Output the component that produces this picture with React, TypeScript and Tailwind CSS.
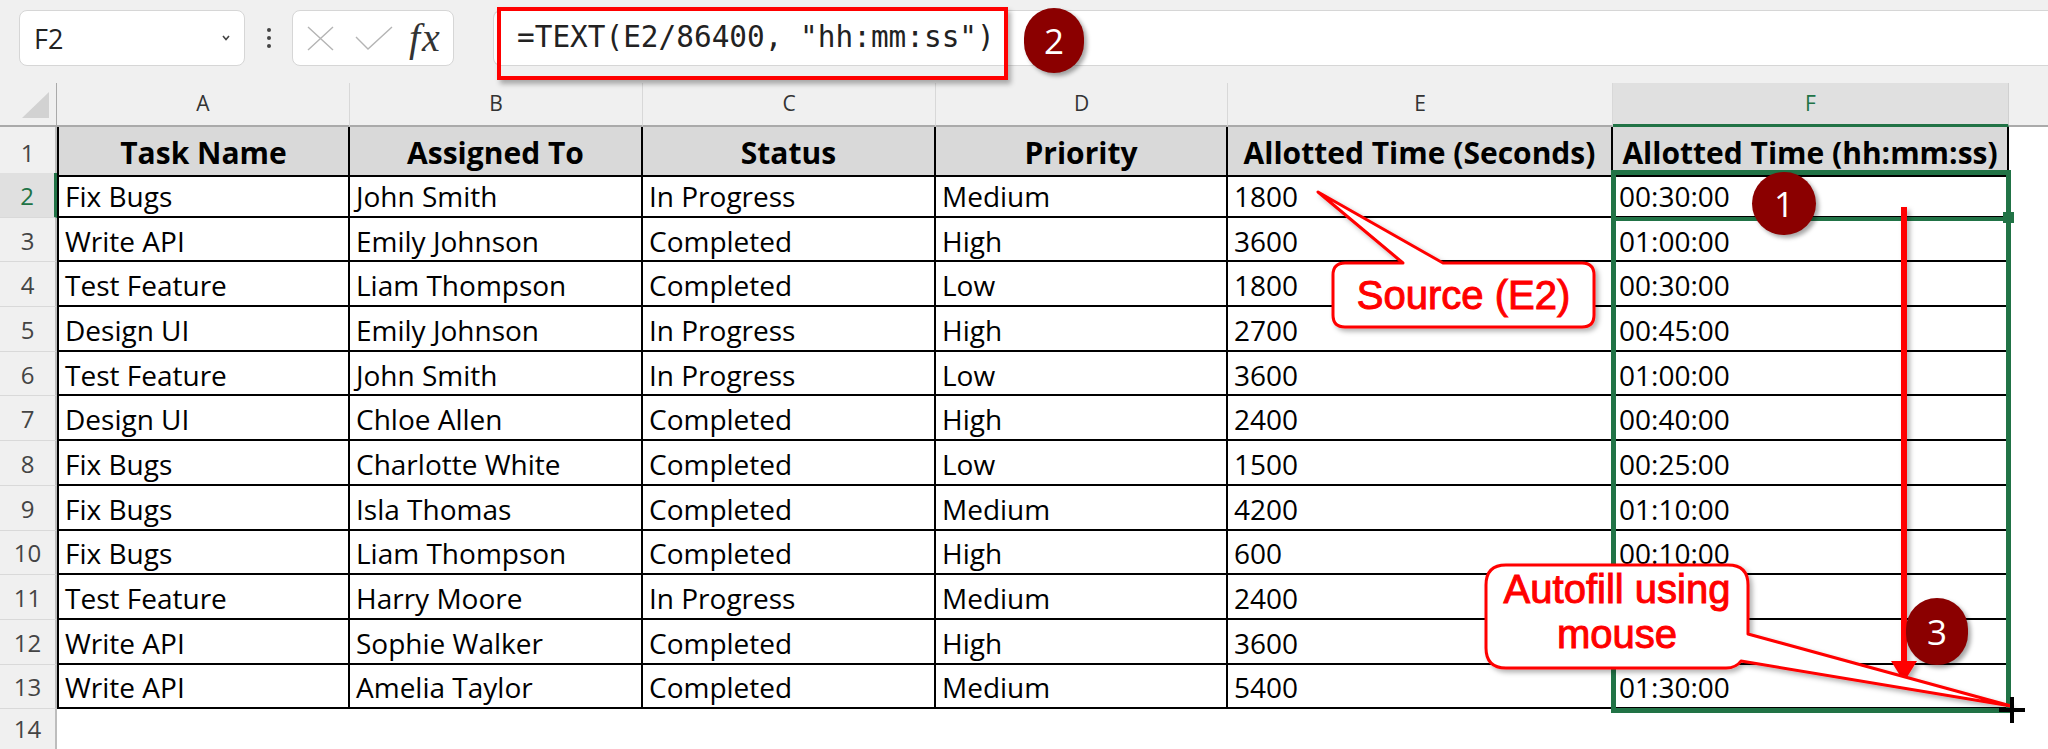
import React from "react";

const letters = ["A", "B", "C", "D", "E", "F"];

const headers = [
  "Task Name",
  "Assigned To",
  "Status",
  "Priority",
  "Allotted Time (Seconds)",
  "Allotted Time (hh:mm:ss)",
];

// F11 and F12 sit under the autofill callout, so they are left blank here
const rows = [
  ["Fix Bugs", "John Smith", "In Progress", "Medium", "1800", "00:30:00"],
  ["Write API", "Emily Johnson", "Completed", "High", "3600", "01:00:00"],
  ["Test Feature", "Liam Thompson", "Completed", "Low", "1800", "00:30:00"],
  ["Design UI", "Emily Johnson", "In Progress", "High", "2700", "00:45:00"],
  ["Test Feature", "John Smith", "In Progress", "Low", "3600", "01:00:00"],
  ["Design UI", "Chloe Allen", "Completed", "High", "2400", "00:40:00"],
  ["Fix Bugs", "Charlotte White", "Completed", "Low", "1500", "00:25:00"],
  ["Fix Bugs", "Isla Thomas", "Completed", "Medium", "4200", "01:10:00"],
  ["Fix Bugs", "Liam Thompson", "Completed", "High", "600", "00:10:00"],
  ["Test Feature", "Harry Moore", "In Progress", "Medium", "2400", ""],
  ["Write API", "Sophie Walker", "Completed", "High", "3600", ""],
  ["Write API", "Amelia Taylor", "Completed", "Medium", "5400", "01:30:00"],
];

const grid = "grid grid-cols-[57px_293px_293px_293px_292px_385px_396px_1fr]";

function Toolbar() {
  return (
    <div className="flex h-[83px] items-start bg-[#f0f0f0] pt-[10px]">
      <div className="ml-[19px] flex h-[56px] w-[226px] items-center justify-between rounded-[8px] border border-[#d6d6d6] bg-white pl-[14px] pr-[14px]">
        <span className="text-[27px] leading-none text-[#222]">F2</span>
        <svg width="8" height="6" viewBox="0 0 8 6">
          <path d="M1 1 L4 4.5 L7 1" stroke="#444" strokeWidth="1.6" fill="none" />
        </svg>
      </div>
      <div className="flex h-[56px] w-[47px] flex-col items-center justify-center gap-[4px]">
        <span className="h-[4px] w-[4px] rounded-full bg-[#444]" />
        <span className="h-[4px] w-[4px] rounded-full bg-[#444]" />
        <span className="h-[4px] w-[4px] rounded-full bg-[#444]" />
      </div>
      <div className="flex h-[56px] w-[162px] items-center rounded-[8px] border border-[#d6d6d6] bg-white pl-[14px]">
        <svg width="27" height="25" viewBox="0 0 27 25">
          <path d="M1 1 L26 24 M26 1 L1 24" stroke="#b4b4b4" strokeWidth="1.4" fill="none" />
        </svg>
        <svg className="ml-[21px]" width="38" height="25" viewBox="0 0 38 25">
          <path d="M1 11 L13 23 L37 1" stroke="#b4b4b4" strokeWidth="1.4" fill="none" />
        </svg>
        <span className="ml-[16px] font-['Liberation_Serif',serif] text-[40px] italic leading-none tracking-[2px] text-[#333]">
          fx
        </span>
      </div>
      <div className="ml-[39px] flex h-[56px] flex-1 items-center rounded-l-[8px] border border-r-0 border-[#d6d6d6] bg-white pl-[23px]">
        <span className="font-['DejaVu_Sans_Mono',monospace] text-[29.4px] leading-none text-[#222]">
          =TEXT(E2/86400, "hh:mm:ss")
        </span>
      </div>
    </div>
  );
}

function ColumnHeaders() {
  return (
    <div className={`${grid} h-[44px] bg-[#f0f0f0]`}>
      <div className="relative border-b-2 border-r border-[#aaaaaa]">
        <svg className="absolute left-[22px] top-[9px]" width="28" height="27" viewBox="0 0 28 27">
          <polygon points="27,0 27,26 0,26" fill="#d2d2d2" />
        </svg>
      </div>
      {letters.map((l) =>
        l === "F" ? (
          <div
            key={l}
            className="flex items-center justify-center border-b-[3px] border-r border-b-[#217346] border-r-[#d0d0d0] bg-[#e0e0e0] text-[21px] text-[#217346]"
          >
            {l}
          </div>
        ) : (
          <div
            key={l}
            className="flex items-center justify-center border-b-2 border-r border-b-[#aaaaaa] border-r-[#d8d8d8] text-[21px] text-[#333]"
          >
            {l}
          </div>
        )
      )}
      <div className="border-b-2 border-[#aaaaaa]" />
    </div>
  );
}

function RowHead({ n, active }: { n: number; active?: boolean }) {
  return (
    <div
      className={
        active
          ? "flex items-center justify-center border-b border-r-[3px] border-b-[#d9d9d9] border-r-[#217346] bg-[#e0e0e0] pt-[2px] text-[24px] text-[#217346]"
          : "flex items-center justify-center border-b border-r-2 border-b-[#d9d9d9] border-r-[#bdbdbd] bg-[#f0f0f0] pt-[2px] text-[24px] text-[#444]"
      }
    >
      {n}
    </div>
  );
}

export default function App() {
  return (
    <div className="relative h-[749px] w-[2048px] overflow-hidden bg-white font-['Open_Sans',sans-serif] text-black">
      <div className="flex h-full flex-col">
        <Toolbar />
        <ColumnHeaders />

        <div className={`${grid} h-[46px]`}>
          <RowHead n={1} />
          {headers.map((h, i) => (
            <div
              key={h}
              className={`flex items-center justify-center whitespace-nowrap border-b-2 border-r-2 border-black bg-[#d9d9d9] pt-[3px] text-[30px] font-bold ${
                i === 0 ? "border-l-2" : ""
              }`}
            >
              {h}
            </div>
          ))}
          <div />
        </div>

        {rows.map((r, ri) => (
          <div key={ri} className={`${grid} h-[44.7px]`}>
            <RowHead n={ri + 2} active={ri === 0} />
            {r.map((v, ci) => (
              <div
                key={ci}
                className={`flex items-center overflow-hidden whitespace-nowrap border-b-2 border-r-2 border-black pl-[6px] pt-[3px] text-[28px] ${
                  ci === 0 ? "border-l-2" : ""
                }`}
              >
                {v}
              </div>
            ))}
            <div />
          </div>
        ))}

        <div className={`${grid} flex-1`}>
          <div className="flex items-center justify-center border-r-2 border-[#bdbdbd] bg-[#f0f0f0] text-[24px] text-[#444]">
            14
          </div>
        </div>
      </div>

      {/* red highlight around the formula */}
      <div className="absolute left-[497px] top-[7px] h-[73px] w-[511px] border-4 border-[#ff0000] shadow-[3px_4px_5px_rgba(0,0,0,0.3)]" />

      <svg className="pointer-events-none absolute left-0 top-0" width="2048" height="749" viewBox="0 0 2048 749">
        <defs>
          <filter id="sh" x="-20%" y="-20%" width="140%" height="140%">
            <feDropShadow dx="3" dy="3" stdDeviation="2.5" floodColor="#000" floodOpacity="0.3" />
          </filter>
        </defs>

        {/* selection range F2:F13 */}
        <rect x="1613.5" y="172.5" width="395" height="538" fill="none" stroke="#217346" strokeWidth="5" />
        <rect x="1611" y="217" width="392" height="4" fill="#217346" />
        <rect x="2003" y="212" width="11" height="11" fill="#217346" />

        {/* drag arrow */}
        <g filter="url(#sh)">
          <rect x="1901" y="207" width="6" height="458" fill="#ff0000" />
          <polygon points="1891,661 1917,661 1904,682" fill="#ff0000" />
        </g>

        {/* Source (E2) callout */}
        <path
          filter="url(#sh)"
          d="M1345 263 L1403 263 L1318 192 L1443 263 L1582 263 Q1594 263 1594 275 L1594 315 Q1594 327 1582 327 L1345 327 Q1333 327 1333 315 L1333 275 Q1333 263 1345 263 Z"
          fill="#fff"
          stroke="#ff0000"
          strokeWidth="3"
          strokeLinejoin="round"
        />

        {/* Autofill callout */}
        <path
          filter="url(#sh)"
          d="M1506 565 L1728 565 Q1748 565 1748 585 L1748 634 L2011 706 L1741 661 Q1736 668 1726 668 L1506 668 Q1486 668 1486 648 L1486 585 Q1486 565 1506 565 Z"
          fill="#fff"
          stroke="#ff0000"
          strokeWidth="3"
          strokeLinejoin="round"
        />

        {/* fill cursor */}
        <rect x="1999" y="708" width="26" height="4" fill="#000" />
        <rect x="2010" y="697" width="4" height="26" fill="#000" />
      </svg>

      <div className="absolute left-[1333px] top-[263px] flex h-[64px] w-[261px] items-center justify-center font-['Liberation_Sans',sans-serif] text-[40px] leading-none text-[#ff0000] [-webkit-text-stroke:1px_#ff0000]">
        Source (E2)
      </div>

      <div className="absolute left-[1486px] top-[565px] flex h-[103px] w-[262px] flex-col items-center pt-[2px] font-['Liberation_Sans',sans-serif] text-[40px] leading-[45px] text-[#ff0000] [-webkit-text-stroke:1px_#ff0000]">
        <span>Autofill using</span>
        <span>mouse</span>
      </div>

      <div className="absolute left-[1024px] top-[8px] flex h-[65px] w-[60px] items-center justify-center rounded-full bg-[#8b0000] text-[35px] leading-none text-white shadow-[3px_3px_4px_rgba(0,0,0,0.35)]">
        2
      </div>
      <div className="absolute left-[1752px] top-[172px] flex h-[63px] w-[64px] items-center justify-center rounded-full bg-[#8b0000] text-[35px] leading-none text-white shadow-[3px_3px_4px_rgba(0,0,0,0.35)]">
        1
      </div>
      <div className="absolute left-[1906px] top-[598px] flex h-[67px] w-[62px] items-center justify-center rounded-full bg-[#8b0000] text-[35px] leading-none text-white shadow-[3px_3px_4px_rgba(0,0,0,0.35)]">
        3
      </div>
    </div>
  );
}
